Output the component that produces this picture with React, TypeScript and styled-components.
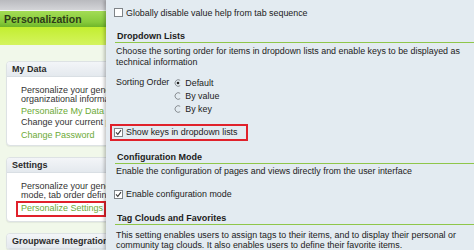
import styled, { createGlobalStyle } from 'styled-components';

const GlobalStyle = createGlobalStyle`
	html, body {
		margin: 0;
		padding: 0;
		background: #ffffff;
	}
	body {
		font-family: 'Liberation Sans', Arial, sans-serif;
	}
`;

const Page = styled.div`
	display: flex;
	width: 474px;
	height: 250px;
	overflow: hidden;
`;

/* left navigation */

const NavColumn = styled.div`
	width: 106px;
	flex-shrink: 0;
	display: flex;
	flex-direction: column;
	overflow: hidden;
	background: #f1f8ea;
`;

const TopStrip = styled.div`
	height: 11px;
	background: linear-gradient(#b9babe, #d3d4d7);
	border-bottom: 1px solid #f4f4f4;
`;

const NavTitle = styled.div`
	height: 16px;
	display: flex;
	align-items: center;
	padding-left: 4px;
	font-size: 10.5px;
	font-weight: bold;
	color: #2d3b17;
	background: linear-gradient(#a3dc55, #86ca3a 70%, #6fb52a);
	white-space: nowrap;
`;

const LimeBand = styled.div`
	height: 19px;
	background: linear-gradient(#c3ee30, #d4f45e);
`;

const CardList = styled.div`
	display: flex;
	flex-direction: column;
	gap: 11px;
	padding: 16px 0 0 6px;
`;

const Card = styled.div`
	width: 170px;
	flex-shrink: 0;
	background: #ffffff;
	border: 1px solid #dde2e4;
	border-radius: 4px;
	box-shadow: 0 1px 1px rgba(0, 0, 0, 0.06);
	overflow: hidden;
`;

const CardHead = styled.div`
	height: 14px;
	display: flex;
	align-items: center;
	padding-left: 5px;
	font-size: 9px;
	font-weight: bold;
	color: #2a2a2a;
	background: linear-gradient(#f3f5f8, #e4e9ee);
	border-bottom: 1px solid #d9dfe4;
	white-space: nowrap;
`;

const CardBody = styled.div`
	display: flex;
	flex-direction: column;
	gap: 1.5px;
	padding: 9.5px 0 4.5px 14px;
`;

const Desc = styled.div`
	font-size: 9px;
	line-height: 8.5px;
	color: #333333;
	white-space: nowrap;
`;

const NavLink = styled.div<{ boxed?: boolean }>`
	align-self: flex-start;
	width: max-content;
	margin-top: ${({ boxed }) => (boxed ? '2px' : '4px')};
	margin-left: ${({ boxed }) => (boxed ? '-5px' : '0')};
	padding: ${({ boxed }) => (boxed ? '1px 1px 1px 3px' : '0')};
	border: ${({ boxed }) => (boxed ? '2px solid #e0212b' : 'none')};
	font-size: 9px;
	line-height: 9.5px;
	color: #6caa36;
	white-space: nowrap;
`;

/* right content */

const ContentPanel = styled.div`
	flex: 1;
	position: relative;
	z-index: 1;
	display: flex;
	flex-direction: column;
	padding: 6px 0 0 8px;
	background: #e3ebf1;
	box-shadow: -2px 0 3px rgba(0, 0, 0, 0.22);
	color: #222222;
	font-size: 8.9px;
`;

const CheckRow = styled.div`
	display: flex;
	align-items: center;
	gap: 3px;
	height: 13px;
	white-space: nowrap;
`;

const Box = styled.span`
	width: 7px;
	height: 7px;
	flex-shrink: 0;
	display: flex;
	align-items: center;
	justify-content: center;
	background: #ffffff;
	border: 1px solid #7f8488;
`;

const Callout = styled.div`
	align-self: flex-start;
	display: inline-flex;
	margin: 8.5px 0 0 -4px;
	padding: 0 9px 0 2px;
	height: 13px;
	border: 2px solid #e0212b;
`;

const Section = styled.div<{ top: number }>`
	display: flex;
	flex-direction: column;
	margin-top: ${({ top }) => top}px;
`;

const SectionTitle = styled.div`
	margin-left: 1px;
	padding-left: 2px;
	font-weight: bold;
	font-size: 9px;
	line-height: 11px;
	color: #1c1c1c;
	border-bottom: 1.5px solid #8fc64a;
`;

const SectionText = styled.div<{ top: number; lh: number }>`
	margin: ${({ top }) => top}px 0 0 2px;
	line-height: ${({ lh }) => lh}px;
	white-space: nowrap;
`;

const OptionGrid = styled.div`
	display: flex;
	gap: 5px;
	margin: 8.5px 0 0 2px;
`;

const OptionLabel = styled.div`
	line-height: 13px;
	white-space: nowrap;
`;

const RadioList = styled.div`
	display: flex;
	flex-direction: column;
`;

const RadioRow = styled.div`
	display: flex;
	align-items: center;
	gap: 3px;
	height: 13px;
	white-space: nowrap;
`;

const Spacer = styled.div<{ h: number }>`
	height: ${({ h }) => h}px;
	flex-shrink: 0;
`;

const Check = ({ on }: { on?: boolean }) => (
	<Box>
		{on && (
			<svg width="7" height="7" viewBox="0 0 7 7">
				<path d="M1 3.4 L2.8 5.4 L6 1.2" fill="none" stroke="#3a3a3a" strokeWidth="1.1" />
			</svg>
		)}
	</Box>
);

const Radio = ({ on }: { on?: boolean }) => (
	<svg width="8" height="8" viewBox="0 0 8 8">
		<path d="M6.2 1.3 A3.3 3.3 0 1 0 6.2 6.7" fill="none" stroke="#8a8f93" strokeWidth="1" />
		{on && <circle cx="4" cy="4" r="1.3" fill="#222" />}
	</svg>
);

const navCards = [
	{
		title: 'My Data',
		items: [
			{ lines: ['Personalize your general data, such as', 'organizational information'], link: 'Personalize My Data' },
			{ lines: ['Change your current password'], link: 'Change Password' },
		],
	},
	{
		title: 'Settings',
		items: [
			{
				lines: ['Personalize your general settings, such as', 'mode, tab order definition and more'],
				link: 'Personalize Settings',
				boxed: true,
			},
		],
	},
	{ title: 'Groupware Integration', items: [] },
];

const App = () => {
	return (
		<Page>
			<GlobalStyle />
			<NavColumn>
				<TopStrip />
				<NavTitle>Personalization</NavTitle>
				<LimeBand />
				<CardList>
					{navCards.map((card) => (
						<Card key={card.title}>
							<CardHead>{card.title}</CardHead>
							{card.items.length > 0 && (
								<CardBody>
									{card.items.map((item) => (
										<div key={item.link}>
											<Desc>
												{item.lines.map((l) => (
													<div key={l}>{l}</div>
												))}
											</Desc>
											<NavLink boxed={item.boxed}>{item.link}</NavLink>
										</div>
									))}
								</CardBody>
							)}
						</Card>
					))}
				</CardList>
			</NavColumn>

			<ContentPanel>
				<CheckRow>
					<Check />
					Globally disable value help from tab sequence
				</CheckRow>

				<Section top={11.5}>
					<SectionTitle>Dropdown Lists</SectionTitle>
					<SectionText top={3} lh={11}>
						Choose the sorting order for items in dropdown lists and enable keys to be displayed as
						<br />
						technical information
					</SectionText>
					<OptionGrid>
						<OptionLabel>Sorting Order</OptionLabel>
						<RadioList>
							<RadioRow>
								<Radio on />
								Default
							</RadioRow>
							<RadioRow>
								<Radio />
								By value
							</RadioRow>
							<RadioRow>
								<Radio />
								By key
							</RadioRow>
						</RadioList>
					</OptionGrid>
					<Callout>
						<CheckRow>
							<Check on />
							Show keys in dropdown lists
						</CheckRow>
					</Callout>
				</Section>

				<Section top={11.5}>
					<SectionTitle>Configuration Mode</SectionTitle>
					<SectionText top={2} lh={11}>
						Enable the configuration of pages and views directly from the user interface
					</SectionText>
					<Spacer h={10.5} />
					<CheckRow>
						<Check on />
						Enable configuration mode
					</CheckRow>
				</Section>

				<Section top={12}>
					<SectionTitle>Tag Clouds and Favorites</SectionTitle>
					<SectionText top={5} lh={10}>
						This setting enables users to assign tags to their items, and to display their personal or
						<br />
						community tag clouds. It also enables users to define their favorite items.
					</SectionText>
				</Section>
			</ContentPanel>
		</Page>
	);
};

export default App;
